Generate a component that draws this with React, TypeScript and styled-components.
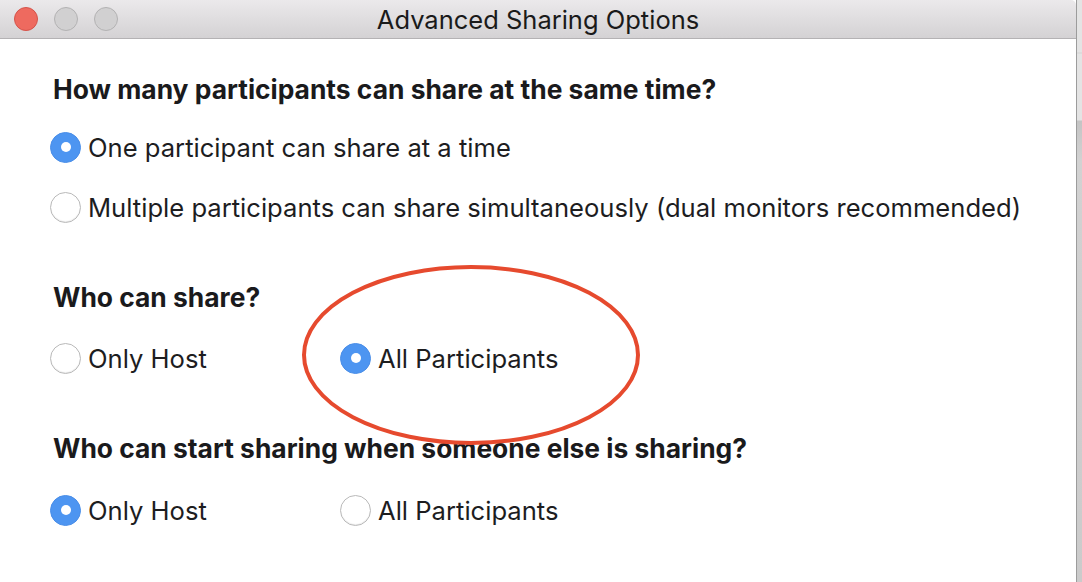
import styled, { createGlobalStyle } from "styled-components"

const GlobalStyle = createGlobalStyle`
  html, body {
    margin: 0;
    padding: 0;
    background: #ffffff;
  }
  body {
    font-family: Inter, "Liberation Sans", Arial, sans-serif;
    color: #1d1d1f;
  }
`

const Screen = styled.div`
  width: 1082px;
  height: 582px;
  display: flex;
  overflow: hidden;
`

const Window = styled.div`
  width: 1076px;
  height: 100%;
  display: flex;
  flex-direction: column;
  background: #ffffff;
  position: relative;
  border-top-right-radius: 5px;
  overflow: hidden;
`

const BehindWindow = styled.div`
  flex: 1;
  background: linear-gradient(to bottom, #e4e4e4 0, #e4e4e4 52px, #d4d4d4 53px, #e4e4e4 54px, #e4e4e4 120px, #c4c4c4 121px, #d2d2d2 160px, #cbcbcb 100%);
  border-left: 1px solid #9c9c9c;
`

const TitleBar = styled.div`
  height: 38px;
  flex-shrink: 0;
  display: flex;
  align-items: center;
  position: relative;
  padding-left: 14px;
  gap: 16px;
  background: linear-gradient(to bottom, #ebe9eb, #d4d2d4);
  border-bottom: 1px solid #b4b2b4;
`

const Light = styled.span<{ $color: string; $border: string }>`
  width: 24px;
  height: 24px;
  border-radius: 50%;
  background: ${p => p.$color};
  border: 1px solid ${p => p.$border};
  box-sizing: border-box;
`

const Title = styled.div`
  position: absolute;
  left: 0;
  right: 0;
  text-align: center;
  font-size: 25.5px;
  color: #1a1a1a;
  pointer-events: none;
`

const Content = styled.div`
  padding: 35px 0 0 53px;
  display: flex;
  flex-direction: column;
  position: relative;
`

const Section = styled.section<{ $headGap: number }>`
  display: flex;
  flex-direction: column;
  gap: ${p => p.$headGap}px;
  & + & {
    margin-top: 45px;
  }
`

const Heading = styled.h3`
  margin: 0;
  height: 30px;
  line-height: 30px;
  font-size: 26.4px;
  font-weight: 700;
  color: #1a1a1c;
  white-space: nowrap;
`

const Options = styled.div`
  display: flex;
  flex-direction: column;
`

const OptionRow = styled.div<{ $columns?: boolean }>`
  display: ${p => (p.$columns ? "grid" : "flex")};
  grid-template-columns: 290px auto;
  height: 60px;
  align-items: center;
  margin-left: -3px;
`

const Option = styled.label`
  display: flex;
  align-items: center;
  gap: 7px;
  font-size: 25.6px;
  color: #1d1d1f;
  white-space: nowrap;
`

const Radio = styled.span<{ $checked?: boolean }>`
  width: 31px;
  height: 31px;
  border-radius: 50%;
  box-sizing: border-box;
  display: flex;
  align-items: center;
  justify-content: center;
  flex-shrink: 0;
  background: ${p => (p.$checked ? "#4d95f1" : "#ffffff")};
  border: 1px solid ${p => (p.$checked ? "#4a8ee8" : "#b9b9b9")};
  box-shadow: ${p => (p.$checked ? "none" : "inset 0 -1px 1px rgba(0,0,0,0.08)")};

  &::after {
    content: "";
    display: ${p => (p.$checked ? "block" : "none")};
    width: 10px;
    height: 10px;
    border-radius: 50%;
    background: #ffffff;
  }
`

const Annotation = styled.svg`
  position: absolute;
  left: 300px;
  top: 224px;
  pointer-events: none;
`

function RadioOption({ label, checked }: { label: string; checked?: boolean }) {
  return (
    <Option>
      <Radio $checked={checked} />
      {label}
    </Option>
  )
}

export default function App() {
  return (
    <Screen>
      <GlobalStyle />
      <Window>
        <TitleBar>
          <Light $color="#ee6a5f" $border="#d5534a" />
          <Light $color="#d1d0d1" $border="#b3b2b3" />
          <Light $color="#d1d0d1" $border="#b3b2b3" />
          <Title>Advanced Sharing Options</Title>
        </TitleBar>
        <Content>
          <Section $headGap={13}>
            <Heading>How many participants can share at the same time?</Heading>
            <Options>
              <OptionRow>
                <RadioOption label="One participant can share at a time" checked />
              </OptionRow>
              <OptionRow>
                <RadioOption label="Multiple participants can share simultaneously (dual monitors recommended)" />
              </OptionRow>
            </Options>
          </Section>
          <Section $headGap={16}>
            <Heading>Who can share?</Heading>
            <OptionRow $columns>
              <RadioOption label="Only Host" />
              <RadioOption label="All Participants" checked />
            </OptionRow>
          </Section>
          <Section $headGap={17}>
            <Heading>Who can start sharing when someone else is sharing?</Heading>
            <OptionRow $columns>
              <RadioOption label="Only Host" checked />
              <RadioOption label="All Participants" />
            </OptionRow>
          </Section>
          <Annotation width="346" height="186" viewBox="0 0 346 186">
            <ellipse cx="171" cy="92" rx="167" ry="88" fill="none" stroke="#e64a2e" strokeWidth="4" />
          </Annotation>
        </Content>
      </Window>
      <BehindWindow />
    </Screen>
  )
}
